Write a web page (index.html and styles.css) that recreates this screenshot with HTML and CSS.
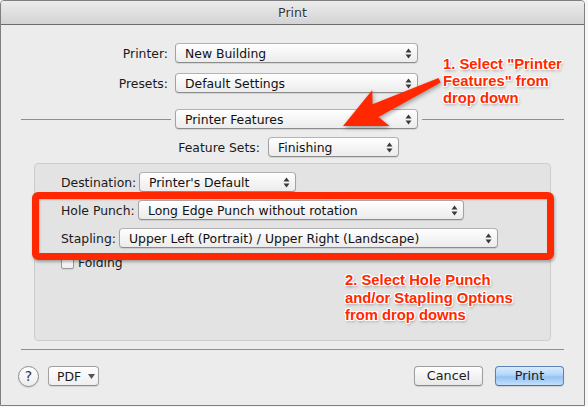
FILE: index.html
```html
<!DOCTYPE html>
<html>
<head>
<meta charset="utf-8">
<title>Print</title>
<link rel="stylesheet" href="styles.css">
</head>
<body>
<div class="window">
  <div class="titlebar">Print</div>
  <div class="content">
    <div class="row row-printer">
      <span class="label">Printer:</span>
      <div class="popup w-main"><span>New Building</span><svg class="stepper" viewBox="0 0 7 11" width="7" height="11"><path d="M0.5 4.5 L3.5 0.5 L6.5 4.5 Z M0.5 6.5 L3.5 10.5 L6.5 6.5 Z"/></svg></div>
    </div>
    <div class="row row-presets">
      <span class="label">Presets:</span>
      <div class="popup w-main"><span>Default Settings</span><svg class="stepper" viewBox="0 0 7 11" width="7" height="11"><path d="M0.5 4.5 L3.5 0.5 L6.5 4.5 Z M0.5 6.5 L3.5 10.5 L6.5 6.5 Z"/></svg></div>
    </div>
    <div class="pane-row">
      <div class="rule rule-left"></div>
      <div class="popup w-main"><span>Printer Features</span><svg class="stepper" viewBox="0 0 7 11" width="7" height="11"><path d="M0.5 4.5 L3.5 0.5 L6.5 4.5 Z M0.5 6.5 L3.5 10.5 L6.5 6.5 Z"/></svg></div>
      <div class="rule rule-right"></div>
    </div>
    <div class="row row-sets">
      <span class="label label-sets">Feature Sets:</span>
      <div class="popup w-sets"><span>Finishing</span><svg class="stepper" viewBox="0 0 7 11" width="7" height="11"><path d="M0.5 4.5 L3.5 0.5 L6.5 4.5 Z M0.5 6.5 L3.5 10.5 L6.5 6.5 Z"/></svg></div>
    </div>
    <div class="group">
      <div class="grow">
        <span class="glabel gl-dest">Destination:</span>
        <div class="popup w-dest"><span>Printer's Default</span><svg class="stepper" viewBox="0 0 7 11" width="7" height="11"><path d="M0.5 4.5 L3.5 0.5 L6.5 4.5 Z M0.5 6.5 L3.5 10.5 L6.5 6.5 Z"/></svg></div>
      </div>
      <div class="grow">
        <span class="glabel gl-hole">Hole Punch:</span>
        <div class="popup w-hole"><span>Long Edge Punch without rotation</span><svg class="stepper" viewBox="0 0 7 11" width="7" height="11"><path d="M0.5 4.5 L3.5 0.5 L6.5 4.5 Z M0.5 6.5 L3.5 10.5 L6.5 6.5 Z"/></svg></div>
      </div>
      <div class="grow">
        <span class="glabel gl-staple">Stapling:</span>
        <div class="popup w-staple"><span>Upper Left (Portrait) / Upper Right (Landscape)</span><svg class="stepper" viewBox="0 0 7 11" width="7" height="11"><path d="M0.5 4.5 L3.5 0.5 L6.5 4.5 Z M0.5 6.5 L3.5 10.5 L6.5 6.5 Z"/></svg></div>
      </div>
      <div class="check-row">
        <span class="checkbox"></span>
        <span>Folding</span>
      </div>
    </div>
    <div class="separator"></div>
    <div class="footer">
      <div class="help">?</div>
      <div class="pdf"><span>PDF</span><svg class="caret" viewBox="0 0 7 5" width="7" height="5"><path d="M0 0 H7 L3.5 5 Z"/></svg></div>
      <div class="spacer"></div>
      <div class="btn">Cancel</div>
      <div class="btn primary">Print</div>
    </div>
  </div>

  <div class="highlight"></div>
  <svg class="arrow" viewBox="0 0 585 406" width="585" height="406">
    <polygon points="343,126 389.5,126.1 378.5,116.9 440.7,82.5 438.5,77.9 372.5,104.3 372.3,89.9"/>
  </svg>
  <p class="note note-1">1. Select "Printer<br>Features" from<br>drop down</p>
  <p class="note note-2">2. Select Hole Punch<br>and/or Stapling Options<br>from drop downs</p>
</div>
</body>
</html>
```

FILE: styles.css
```css
html, body {
  margin: 0;
  padding: 0;
}
body {
  background: #f7f7f7;
  font-family: "DejaVu Sans", "Liberation Sans", sans-serif;
  font-size: 12.4px;
  color: #1a1a1a;
}
.window {
  position: relative;
  box-sizing: border-box;
  width: 585px;
  height: 406px;
  border: 1px solid #7f7f7f;
  border-radius: 4px 4px 0 0;
  background: #ececec;
  overflow: hidden;
}
.titlebar {
  height: 23px;
  border-bottom: 1px solid #6a6a6a;
  background: linear-gradient(#ececec, #d3d3d3);
  text-align: center;
  line-height: 24px;
  font-size: 12.5px;
  color: #333;
  text-shadow: 0 1px 0 rgba(255,255,255,0.7);
}
.content {
  padding-top: 18px;
}
.row {
  display: flex;
  align-items: center;
  height: 20px;
}
.row-presets { margin-top: 10px; }
.label {
  width: 167px;
  text-align: right;
  margin-right: 7px;
}
.label-sets {
  width: 259px;
  margin-right: 8px;
}
.row-sets { margin-top: 8px; }

.popup {
  display: flex;
  align-items: center;
  justify-content: space-between;
  box-sizing: border-box;
  height: 20px;
  padding: 0 5px 0 9px;
  border: 1px solid #a2a2a2;
  border-top-color: #b2b2b2;
  border-bottom-color: #8c8c8c;
  border-radius: 4px;
  background: linear-gradient(#ffffff, #f3f3f3 60%, #ececec);
  box-shadow: 0 1px 1px rgba(0,0,0,0.1);
  white-space: nowrap;
  color: #111;
}
.stepper { fill: #3a3a3a; flex: none; }
.w-main { width: 243px; }
.w-sets { width: 131px; }
.w-dest { width: 157px; }
.w-hole { width: 326px; }
.w-staple { width: 379px; }

.pane-row {
  display: flex;
  align-items: center;
  margin: 16px 20px 0 20px;
  height: 20px;
}
.rule {
  height: 1px;
  background: #8e8e8e;
}
.rule-left { width: 150px; margin-right: 4px; }
.rule-right { flex: 1; margin-left: 4px; }

.group {
  box-sizing: border-box;
  height: 178px;
  margin: 6px 33px 0 33px;
  padding: 8px 0 0 26px;
  border: 1px solid #cdcdcd;
  border-radius: 4px;
  background: #e3e3e3;
}
.grow {
  display: flex;
  align-items: center;
  height: 20px;
  margin-bottom: 8px;
}
.glabel { flex: none; }
.gl-dest { width: 78px; }
.gl-hole { width: 77px; }
.gl-staple { width: 58px; }
.check-row {
  display: flex;
  align-items: center;
  margin-top: 4px;
  height: 13px;
}
.checkbox {
  box-sizing: border-box;
  width: 13px;
  height: 13px;
  margin-right: 4px;
  border: 1px solid #999;
  border-radius: 2px;
  background: linear-gradient(#ffffff, #efefef);
  box-shadow: 0 1px 1px rgba(0,0,0,0.08);
}

.separator {
  height: 1px;
  margin: 8px 20px 0 20px;
  background: #8e8e8e;
}
.footer {
  display: flex;
  align-items: flex-start;
  margin: 16px 20px 0 17px;
}
.spacer { flex: 1; }
.help {
  box-sizing: border-box;
  width: 21px;
  height: 21px;
  border: 1px solid #8d8d8d;
  border-radius: 50%;
  background: linear-gradient(#ffffff, #ededed);
  box-shadow: 0 1px 1px rgba(0,0,0,0.12);
  text-align: center;
  line-height: 19px;
  font-size: 14px;
  color: #333;
}
.pdf {
  display: flex;
  align-items: center;
  box-sizing: border-box;
  width: 51px;
  height: 20px;
  margin-left: 9px;
  padding-left: 8px;
  border: 1px solid #a0a0a0;
  border-bottom-color: #8c8c8c;
  border-radius: 4px;
  background: linear-gradient(#ffffff, #efefef);
  box-shadow: 0 1px 1px rgba(0,0,0,0.1);
}
.caret { fill: #555; margin-left: 7px; }
.btn {
  box-sizing: border-box;
  width: 69px;
  height: 20px;
  margin-left: 12px;
  border: 1px solid #9e9e9e;
  border-bottom-color: #888;
  border-radius: 4px;
  background: linear-gradient(#ffffff, #f1f1f1 55%, #e9e9e9);
  box-shadow: 0 1px 1px rgba(0,0,0,0.12);
  text-align: center;
  line-height: 18px;
  font-size: 12.8px;
}
.btn.primary {
  border-color: #5b82b8;
  border-bottom-color: #4a6fa4;
  background: linear-gradient(#d9ebfd, #b2d5fa 45%, #94c2f3 55%, #c3e0fc);
}

/* annotation overlays */
.highlight {
  position: absolute;
  left: 31px;
  top: 191px;
  box-sizing: border-box;
  width: 522px;
  height: 68px;
  border: 7px solid #ff2800;
  border-radius: 6px;
  box-shadow: 1px 2px 3px rgba(0,0,0,0.3), inset 1px 1px 2px rgba(0,0,0,0.2);
}
.arrow {
  position: absolute;
  left: -1px;
  top: -1px;
  fill: #ff2800;
  filter: drop-shadow(1px 2px 2px rgba(0,0,0,0.35));
}
.note {
  position: absolute;
  margin: 0;
  font-family: "Liberation Sans", Arial, sans-serif;
  font-weight: bold;
  font-size: 14.8px;
  line-height: 17px;
  color: #ff2800;
  white-space: nowrap;
  text-shadow: 1px 0 0 #fff, -1px 0 0 #fff, 0 1px 0 #fff, 0 -1px 0 #fff,
    1px 1px 0 #fff, -1px -1px 0 #fff, 1px -1px 0 #fff, -1px 1px 0 #fff,
    1px 2px 3px rgba(0,0,0,0.35);
}
.note-1 { left: 442px; top: 55px; }
.note-2 { left: 344px; top: 271px; line-height: 17.5px; }
```
